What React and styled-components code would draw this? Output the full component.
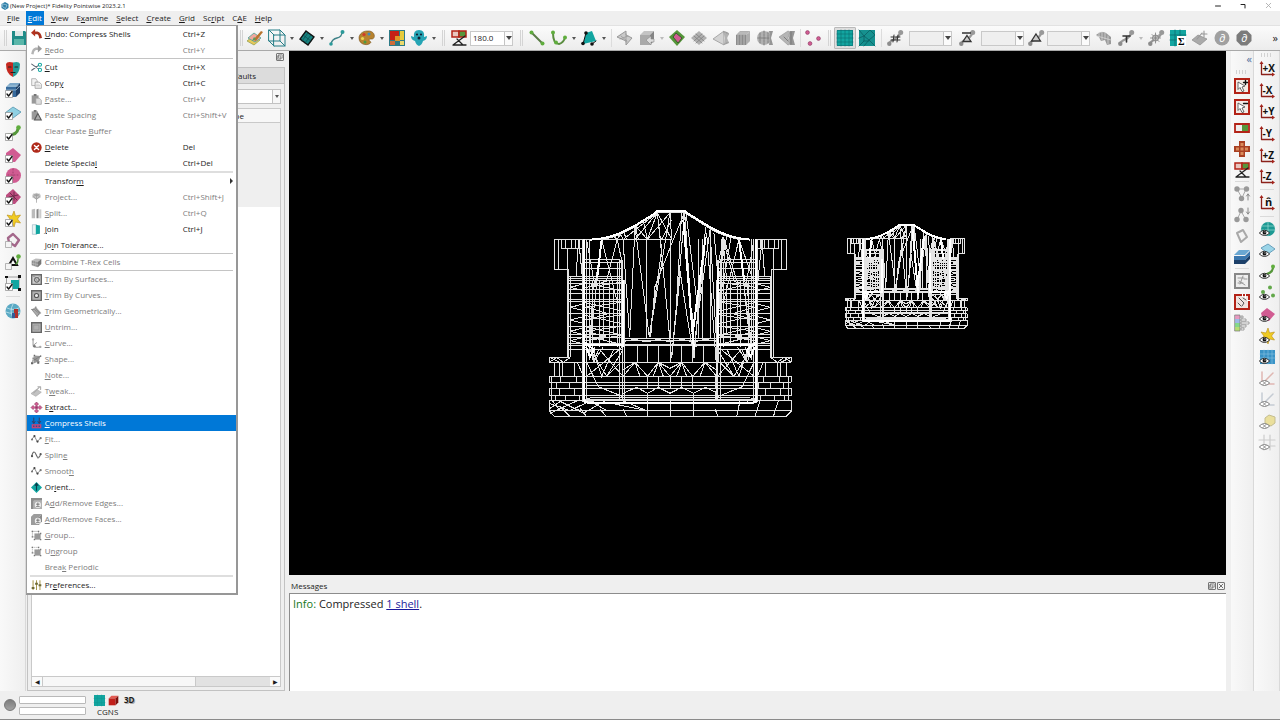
import React from "react";
import styled, { createGlobalStyle } from "styled-components";

const GlobalStyle = createGlobalStyle`
  * {
    box-sizing: border-box;
  }
  body {
    margin: 0;
    background: #efefef;
    color: #1c1c1c;
    font-family: "Open Sans", "Noto Sans", sans-serif;
    font-size: 8px;
    line-height: 12px;
  }
  button, input, select {
    font: inherit;
    color: inherit;
  }
`;

/* ---------- layout ---------- */

const Window = styled.div`
  display: flex;
  flex-direction: column;
  height: 100vh;
  overflow: hidden;
`;
const TitleBar = styled.header`
  display: flex;
  align-items: center;
  gap: 1px;
  height: 11px;
  padding-left: 1px;
  background: #fff;
`;
const Title = styled.h1`
  flex: 1;
  margin: 0;
  font-size: 6px;
  font-weight: 400;
`;
const WindowButton = styled.button`
  display: flex;
  align-items: center;
  justify-content: center;
  width: 24px;
  height: 11px;
  padding: 0;
  border: 0;
  background: none;
`;
const MenuBar = styled.nav`
  display: flex;
  height: 14px;
  padding-left: 3px;
`;
const MenuSlot = styled.div`
  position: relative;
  margin: 0 ${props => (props.$open ? "3px" : "0")} 0 ${props => (props.$open ? "2px" : "0")};
`;
const MenuButton = styled.button`
  height: 14px;
  padding: 0 ${props => (props.$open ? "2px" : "4px")};
  border: 0;
  background: ${props => (props.$open ? "#0078d7" : "none")};
  color: ${props => (props.$open ? "#fff" : "#1c1c1c")};
  line-height: 14px;
`;
const Body = styled.main`
  display: flex;
  flex: 1;
  min-height: 0;
`;

/* ---------- edit menu ---------- */

const MenuPopup = styled.div`
  position: absolute;
  z-index: 5;
  top: 100%;
  left: 0;
  width: 212px;
  border: 1px solid #a0a0a0;
  border-right: 2px solid #979797;
  border-bottom: 2px solid #979797;
  background: #fff;
`;
const MenuRow = styled.button`
  display: grid;
  grid-template-columns: 18px 138px 1fr 6px;
  align-items: center;
  width: 100%;
  height: 16px;
  padding: 0;
  border: 0;
  background: ${props => (props.$active ? "#0078d7" : "none")};
  color: ${props => (props.$active ? "#fff" : "#1c1c1c")};
  text-align: left;
  white-space: nowrap;
  &:disabled {
    color: #7d7d7d;
  }
  svg {
    margin-left: 4px;
  }
`;
const MenuSeparator = styled.hr`
  height: ${props => (props.$thick ? "2px" : "1px")};
  margin: 0 3px;
  border: 0;
  background: ${props => (props.$thick ? "#dedede" : "#c4c4c4")};
`;
const SubmenuArrow = styled.span`
  border: 3px solid transparent;
  border-left-color: #333;
  width: 0;
`;

/* ---------- toolbars ---------- */

const Toolbar = styled.div`
  display: flex;
  align-items: center;
  height: 26px;
  border-top: 1px solid #e2e2e2;
  border-bottom: 1px solid #a9a9a9;
  background: linear-gradient(#fbfbfb, #ececec);
`;
const FileTools = styled.div`
  display: flex;
  align-items: center;
  flex: 0 0 236px;
`;
const Handle = styled.span`
  flex: none;
  width: ${props => props.$width || 10}px;
  height: 16px;
  background: linear-gradient(90deg, #d4d4d4 1px, transparent 1px 2px, #d4d4d4 2px 3px, transparent 3px) no-repeat 4px 0;
`;
const Divider = styled.span`
  flex: none;
  width: ${props => props.$width || 5}px;
  height: 18px;
  background: linear-gradient(#dcdcdc, #dcdcdc) no-repeat center / 1px 100%;
`;
const ToolButton = styled.button`
  display: flex;
  flex: none;
  align-items: center;
  justify-content: center;
  width: 22px;
  height: 22px;
  padding: 0;
  border: 1px solid ${props => (props.$on ? "#b9b9b9" : "transparent")};
  border-radius: 1px;
  background: ${props => (props.$on ? "#dedede" : "none")};
`;
const CaretButton = styled.button`
  flex: none;
  width: 8px;
  height: 20px;
  padding: 0;
  border: 0;
  background: none;
  &::before {
    content: "";
    display: block;
    width: 0;
    margin: auto;
    border: 2px solid transparent;
    border-top: 3px solid ${props => (props.$off ? "#bbb" : "#555")};
    border-bottom: 0;
  }
`;
const Combo = styled.div`
  display: flex;
  flex: none;
  width: 43px;
  height: 15px;
  margin: 0 ${props => props.$gap || 0}px 0 ${props => props.$lead || 0}px;
  border: 1px solid #c9c9c9;
  background: ${props => (props.$off ? "#efefef" : "#fff")};
  input {
    flex: 1;
    min-width: 0;
    padding: 0 2px;
    border: 0;
    background: none;
    outline: none;
  }
  ${CaretButton} {
    height: 13px;
    border-left: 1px solid #c4c4c4;
    background: #fbfbfb;
    &::before {
      border-left-width: 3px;
      border-right-width: 3px;
      border-top: 4px solid #444;
    }
  }
`;
const Overflow = styled.button`
  margin: 0 0 0 auto;
  padding: 0 2px;
  border: 0;
  background: none;
  font-size: 11px;
`;
const SideStrip = styled.aside`
  display: flex;
  flex: none;
  flex-direction: column;
  width: ${props => props.$width}px;
  padding-top: ${props => props.$top}px;
  border-right: 1px solid #d9d9d9;
  background: linear-gradient(90deg, #f9f9f9, #efefef);
`;
const StripGroup = styled.div`
  display: flex;
  flex-direction: column;
  align-items: center;
  height: ${props => props.$size}px;
  ${ToolButton} {
    flex: 1;
    height: auto;
    min-height: 0;
  }
`;
const StripRule = styled.hr`
  flex: none;
  width: 14px;
  height: 1px;
  margin: ${props => props.$gap || 1}px auto;
  border: 0;
  background: #dadada;
`;
const StripGrip = styled.span`
  width: 12px;
  height: 4px;
  margin: ${props => props.$top}px auto 1px;
  background: repeating-linear-gradient(90deg, #d2d2d2 0 1px, transparent 1px 3px);
`;
const Collapse = styled.button`
  align-self: flex-end;
  height: 12px;
  padding: 0 1px;
  border: 0;
  background: none;
  color: #4d6c9c;
  font-size: 11px;
  line-height: 10px;
`;

/* ---------- dock panel ---------- */

const Dock = styled.section`
  display: flex;
  flex: none;
  flex-direction: column;
  width: 259px;
  padding-top: 2px;
`;
const DockHeader = styled.div`
  display: flex;
  justify-content: flex-end;
  gap: 1px;
  height: 14px;
  padding: 0 1px;
`;
const SmallButton = styled.button`
  width: 8px;
  height: 8px;
  padding: 0;
  border: 1px solid #777;
  border-radius: 1px;
  background: #f4f4f4;
  svg {
    display: block;
  }
`;
const Tab = styled.button`
  height: 17px;
  margin-left: 120px;
  padding: 0 28px 0 0;
  border: 1px solid #c2c2c2;
  background: #dcdcdc;
  text-align: right;
`;
const DockPage = styled.div`
  display: flex;
  flex: 1;
  flex-direction: column;
  min-height: 0;
  margin-left: 1px;
  padding: 5px 3px 3px;
  border: 1px solid #c2c2c2;
  border-top: 0;
`;
const DockSelect = styled.div`
  display: flex;
  justify-content: flex-end;
  height: 15px;
  margin-bottom: 4px;
  border: 1px solid #c2c2c2;
  background: #fff;
  select {
    flex: 1;
    border: 0;
    appearance: none;
    background: none;
  }
  ${CaretButton} {
    height: 13px;
    border-left: 1px solid #c2c2c2;
    background: #f7f7f7;
  }
`;
const EntityTable = styled.table`
  width: 100%;
  border-collapse: collapse;
  th {
    height: 14px;
    padding: 0 36px 0 0;
    border: 1px solid #c9c9c9;
    background: #f7f7f7;
    font-weight: 400;
    text-align: right;
  }
  td {
    height: 84px;
    background: #efefef;
    border-right: 1px solid #c9c9c9;
  }
`;
const EntityList = styled.div`
  flex: 1;
  border: 1px solid #c9c9c9;
  border-top: 0;
  background: #fff;
`;
const ScrollBar = styled.div`
  display: grid;
  grid-template-columns: 10px 62% 1fr 10px;
  height: 10px;
  border: 1px solid #c9c9c9;
  border-top: 0;
  background: #e2e2e2;
`;
const ScrollArrow = styled.button`
  padding: 0;
  border: 0;
  background: #fafafa;
  font-size: 6px;
  line-height: 8px;
`;
const ScrollThumb = styled.span`
  border: 1px solid #c9c9c9;
  border-width: 0 1px;
  background: #f7f7f7;
`;
const ScrollTrack = styled.span`
  background: #e2e2e2;
`;

/* ---------- view, messages, status ---------- */

const Center = styled.div`
  display: flex;
  flex: 1;
  flex-direction: column;
  min-width: 0;
  margin: 0 5px 0 4px;
`;
const Viewport = styled.div`
  flex: 1;
  min-height: 0;
  background: #000;
  svg {
    display: block;
    width: 100%;
    height: 100%;
  }
`;
const MessagesHeader = styled.div`
  display: flex;
  align-items: center;
  gap: 1px;
  height: 18px;
  padding: 4px 1px 0 2px;
  h2 {
    flex: 1;
    margin: 0;
    font-size: 8px;
    font-weight: 400;
  }
`;
const MessageLog = styled.div`
  height: 98px;
  padding: 2px 3px;
  border: 1px solid #8c8c8c;
  border-right: 0;
  border-bottom: 0;
  background: #fff;
  font-size: 11px;
  line-height: 16px;
  b {
    color: #16781a;
    font-weight: 400;
  }
  a {
    color: #1a1a9c;
  }
`;
const StatusBar = styled.footer`
  display: flex;
  align-items: center;
  gap: 3px;
  height: 29px;
  padding-left: 4px;
  border-bottom: 1px solid #8a8a8a;
`;
const StopButton = styled.button`
  width: 12px;
  height: 12px;
  padding: 0;
  border: 1px solid #777;
  border-radius: 50%;
  background: linear-gradient(#7d7d7d, #a2a2a2);
`;
const ProgressStack = styled.div`
  display: flex;
  flex-direction: column;
  gap: 3px;
  width: 67px;
`;
const ProgressTrack = styled.div`
  height: 8px;
  border: 1px solid #b9b9b9;
  border-radius: 1px;
  background: #fff;
`;
const SolverInfo = styled.div`
  display: flex;
  flex-direction: column;
  align-items: flex-start;
  margin-left: 5px;
  padding-top: 2px;
  span {
    padding-left: 3px;
  }
`;
const SolverIcons = styled.div`
  display: flex;
  align-items: center;
  gap: 3px;
  height: 12px;
  strong {
    padding-left: 2px;
    text-shadow: 1px 1px 0 #aaa;
  }
`;

/* ---------- icons ---------- */

const TEAL = "#12a5a0";
const DEEP_TEAL = "#0b6c70";
const GREEN = "#55963a";
const PINK = "#d15c92";
const RED = "#b32317";
const GRAY = "#a9a9a9";

const line = (color, width = 1.2) => ({
  fill: "none",
  stroke: color,
  strokeWidth: width,
  strokeLinecap: "round",
  strokeLinejoin: "round",
});

const Check = () => (
  <>
    <path d="M.5 8.5h7v7h-7z" fill="#fff" stroke="#8a8a8a" strokeWidth=".7" />
    <path d="M2 12l1.6 2L7 9.5" {...line("#111", 1.3)} />
  </>
);
const Box = () => <path d="M.5 9.5h6v6h-6z" fill="#f4f4f4" stroke="#999" strokeWidth=".7" />;
const Eye = () => (
  <>
    <path d="M.3 12Q5.500 6.500 10.700 12Q5.500 17 .3 12z" fill="#fff" stroke="#222" strokeWidth=".9" />
    <circle cx="5.500" cy="11.700" r="1.900" fill="#111" />
    <circle cx="6" cy="11" r=".6" fill="#fff" />
  </>
);
const EyeOff = () => (
  <>
    <path d="M.3 12Q5.500 7 10.700 12Q5.500 17 .3 12z" fill="#fff" stroke="#777" strokeWidth=".9" />
    <path d="M4 10.500l3 3M7 10.500l-3 3" {...line("#777", 0.8)} />
  </>
);
const AxisArrows = () => (
  <>
    <path d="M2.500 2v11.500H14" {...line("#8c211a", 1.3)} />
    <path d="M2.500 0l2 3h-4zM16 13.500l-3-2v4z" fill="#a3241c" />
  </>
);
const Axis = ({ label }) => (
  <>
    <AxisArrows />
    <text x="3.500" y="10.500" fontSize="10" fontWeight="700" fill="#111">{label}</text>
  </>
);
const Connector = ({ children }) => (
  <>
    <path d="M2 14Q3 11 7 9.500T13.500 3" {...line("#999", 2.4)} />
    <circle cx="2.300" cy="13.700" r="2.200" fill="#8c8c8c" />
    <circle cx="13.700" cy="2.500" r="2.500" fill="#999" />
    {children}
  </>
);
const Cube = ({ top, front, side }) => (
  <>
    <path d="M1 5l4-4h10l-4 4z" fill={top} />
    <path d="M1 5h10v10H1z" fill={front} />
    <path d="M11 5l4-4v10l-4 4z" fill={side} />
  </>
);
const GroupShape = ({ dots }) => (
  <>
    <path d="M2 2h9v8H2z" {...line("#aaa", 1)} strokeDasharray={dots ? "1 2" : "2 1"} />
    <path d="M5 5h9v9H5z" fill="#999" />
    <path d="M1 1h2v2H1zM10 1h2v2h-2zM1 9h2v2H1zM13 4h2v2h-2zM13 13h2v2h-2zM4 13h2v2H4z" fill="#777" />
  </>
);
const PlusMinus = () => (
  <>
    <circle cx="10" cy="10" r="4.500" fill="#eee" />
    <path d="M10 7v4M8 9h4M8 12.500h4" {...line("#555", 1)} />
  </>
);

const icons = {
  app: (
    <>
      <path d="M8 0l7 4v8l-7 4-7-4V4z" fill="#2f7fa8" />
      <path d="M4 4l8 2-3 7-5-3z" {...line("#d4eef8", 1)} />
    </>
  ),
  save: (
    <>
      <path d="M1 1h13l1 1v13H1z" fill="#208c88" />
      <path d="M4 1h8v5H4z" fill="#dfe9e8" />
      <path d="M3 9h10v6H3z" fill="#5bb6a9" />
    </>
  ),
  undo: (
    <>
      <path d="M4 5.500h5q4 1 5 8" {...line("#a8321f", 4)} strokeLinecap="butt" />
      <path d="M0 5.500L6 0v11z" fill="#b3321f" />
    </>
  ),
  redo: (
    <>
      <path d="M12 5.500H7q-4 1-5 8" {...line("#b4b4b4", 3.500)} strokeLinecap="butt" />
      <path d="M16 5.500L10 0v11z" fill="#999" />
    </>
  ),
  cut: (
    <>
      <path d="M1 3l10 7M1 12l10-7" {...line("#5a6470", 1.5)} />
      <circle cx="13" cy="4" r="2.300" {...line(TEAL, 1.5)} />
      <circle cx="13" cy="11.500" r="2.300" {...line(TEAL, 1.5)} />
    </>
  ),
  copy: (
    <>
      <path d="M1 1h6l2 3v7H1z" fill="#f2f2f2" stroke="#999" />
      <path d="M6 6h6l3 3v6H6z" fill="#fff" stroke="#888" />
      <path d="M8 9h4M8 11h5M8 13h5" {...line("#aaa", 0.8)} />
    </>
  ),
  paste: (
    <>
      <path d="M1 2h10v12H1z" fill="#999" />
      <path d="M4 0h4v3H4z" fill="#777" />
      <path d="M7 6h5l3 3v6H7z" fill="#ddd" stroke="#999" />
    </>
  ),
  pasteSpacing: (
    <>
      <path d="M1 2h9v12H1z" fill="#999" />
      <path d="M4 0h4v3H4z" fill="#777" />
      <path d="M10 5l5 9.500H5z" fill="#aaa" stroke="#555" strokeWidth="1.500" />
    </>
  ),
  remove: (
    <>
      <circle cx="8" cy="8" r="7.500" fill="#b02a1a" />
      <path d="M5 5l6 6M11 5l-6 6" {...line("#fff", 2)} />
    </>
  ),
  project: (
    <>
      <path d="M8 1l6 3v4l-6 3-6-3V4z" fill="#c4c4c4" />
      <path d="M8 4v11M4 7l4 4 4-4M4 3l8 3M12 3L4 6" {...line("#999", 1)} />
    </>
  ),
  split: (
    <>
      <path d="M1 2l5-1v14H1z" fill="#bbb" />
      <path d="M8 2l3-1v14H8z" fill="#888" />
      <path d="M12 2h3v13h-3z" fill="#ccc" />
    </>
  ),
  join: (
    <>
      <path d="M2 1h6v14H2z" fill="#e9f4f4" stroke="#8ab" strokeWidth=".8" />
      <path d="M7 1l6 1v12l-6 1z" fill={TEAL} />
    </>
  ),
  combine: (
    <>
      <path d="M1 5l6-3 8 1-5 4z" fill="#bbb" />
      <path d="M1 5l9 2v8l-9-3z" fill="#8c8c8c" />
      <path d="M10 7l5-4v7l-5 5z" fill="#777" />
      <path d="M4 6v7M7 6v8M1 9l9 2" {...line("#ccc", 0.7)} />
    </>
  ),
  trimSurfaces: (
    <>
      <path d="M1 1h14v14H1z" fill="#ccc" stroke="#666" strokeWidth="2" />
      <circle cx="8.500" cy="8.500" r="3.500" {...line("#555", 1.4)} />
      <path d="M3 3l6 3 3-2M6 6l4 5" {...line("#777", 1)} />
    </>
  ),
  trimCurves: (
    <>
      <path d="M1 1h14v14H1z" fill="#b0b0b0" stroke="#666" strokeWidth="2" />
      <circle cx="8" cy="8" r="3" fill="#eee" stroke="#555" strokeWidth="1.600" />
    </>
  ),
  trimGeo: (
    <>
      <path d="M1 5l6-4 8 9-6 5z" fill="#aaa" />
      <path d="M1 5h4l7 6-3 4M7 1v3l6 6M1 5l8 10" {...line("#777", 1)} />
    </>
  ),
  untrim: (
    <>
      <path d="M1 1h14v14H1z" fill="#b0b0b0" stroke="#666" strokeWidth="2" />
      <path d="M4.500 4.500h7v7h-7z" {...line("#8c8c8c", 0.8)} />
    </>
  ),
  curveMenu: (
    <>
      <path d="M3 2v9q3 4 10 2M3 11l5-4" {...line("#8c8c8c", 1.3)} />
      <circle cx="3" cy="2" r="1.700" fill="#aaa" />
      <circle cx="5" cy="12" r="1.900" fill="#777" />
      <circle cx="13.500" cy="13" r="1.700" fill="#aaa" />
    </>
  ),
  shapeMenu: (
    <>
      <path d="M5 2l9 1-3 8-8 3z" fill="#999" />
      <path d="M1 14l4-12M14 3L4 9M2 6l10 5" {...line("#777", 1)} />
      <path d="M0 12h3v3H0zM4 1h2v2H4zM13 2h2v2h-2zM9 11h3v3H9z" fill="#666" />
    </>
  ),
  tweak: (
    <>
      <path d="M0 11l8-6 7 4-8 6z" fill="#c2c2c2" stroke="#aaa" />
      <path d="M4 10L13 1M10 1h4v4" {...line("#aaa", 1.5)} />
    </>
  ),
  extract: (
    <>
      <path d="M8 0l3 3-3 3-3-3zM3 5l3 3-3 3-3-3zM13 5l3 3-3 3-3-3zM8 10l3 3-3 3-3-3z" fill={PINK} stroke="#7c2c52" strokeWidth=".8" />
      <path d="M6 6h4v4H6z" fill="#a1366c" />
    </>
  ),
  compress: (
    <>
      <path d="M1 9h14v6H1z" fill="#c24678" />
      <path d="M4 0v7M12 0v7M2 5l2 3 2-3M10 5l2 3 2-3" {...line("#38385c", 1.4)} />
      <path d="M3 11h2v2H3zM7 11h2v2H7zM11 11h2v2h-2z" fill="#304c92" />
    </>
  ),
  fit: (
    <>
      <path d="M1 8L5 3l4 8 5-5" {...line("#888", 1.4)} />
      <circle cx="1.500" cy="8" r="1.600" fill="#777" />
      <circle cx="5" cy="3" r="1.600" fill="#444" />
      <circle cx="9.500" cy="11" r="1.600" fill="#444" />
      <circle cx="14" cy="6" r="1.600" fill="#777" />
    </>
  ),
  spline: (
    <>
      <path d="M1 9Q4-2 7.500 7T14 6" {...line("#666", 1.6)} />
      <circle cx="1.500" cy="9" r="1.600" fill="#555" />
      <circle cx="10" cy="11" r="1.500" fill="#888" />
      <circle cx="14" cy="6" r="1.600" fill="#555" />
    </>
  ),
  orient: (
    <>
      <path d="M8 0l8 8-8 8-8-8z" fill={TEAL} />
      <path d="M8 3v9M6 5l2-3 2 3" {...line("#0b3c4c", 1.6)} />
    </>
  ),
  addEdges: (
    <>
      <path d="M0 0h16v4H4v12H0z" fill="#8c8c8c" />
      <path d="M4 4h12v12H4z" fill="#b0b0b0" />
      <PlusMinus />
    </>
  ),
  addFaces: (
    <>
      <path d="M0 4l4-4h12l-4 4v12H0z" fill="#9c9c9c" />
      <path d="M11 5l5-5v11l-5 5z" fill="#8a8a8a" />
      <PlusMinus />
    </>
  ),
  group: <GroupShape />,
  ungroup: <GroupShape dots />,
  prefs: (
    <>
      <path d="M3 1v13M8 1v13M13 1v13" {...line("#9b8a35", 1.3)} />
      <path d="M1 10h4v3H1zM6 4h4v3H6zM11 6h4v3h-4z" fill="#6e6a35" />
    </>
  ),

  sheets: (
    <>
      <path d="M0 11l6-5 7 4-6 5z" fill="#e7c95a" stroke="#8b9b48" strokeWidth=".7" />
      <path d="M1 8l6-5 7 5-6 4z" fill="#f0a8a0" stroke="#58a89a" strokeWidth=".9" />
      <path d="M6 10L14 1l2 1-7 9z" fill="#b8742e" />
      <path d="M5 11l2-4 2 2z" fill="#51a060" />
    </>
  ),
  wireCube: <path d="M0 0h11v11H0zM5 5h11v11H5zM0 0l5 5M11 0l5 5M0 11l5 5M11 11l5 5" {...line("#247d86", 1)} />,
  domain: (
    <>
      <path d="M7 1l8 6-6 8-8-6z" fill="#17827f" stroke="#111" strokeWidth="1.400" />
      <path d="M4 5l8 6M9 3L3 11M12 5l-6 8" {...line("#0c4b4d", 0.7)} />
    </>
  ),
  tealCurve: (
    <>
      <path d="M2 14Q3 9 8 8t5-6" {...line("#3f8288", 1.3)} />
      <circle cx="2" cy="14" r="1.800" fill="#2b9a9a" />
      <circle cx="13.500" cy="2" r="2" fill="#2b9a9a" />
    </>
  ),
  palette: (
    <>
      <path d="M8 1c9-1 9 9 4 8-3 0-2 2 0 3-1 4-12 4-12-4C0 4 4 1 8 1z" fill="#b8832e" stroke="#74501d" strokeWidth=".6" />
      <circle cx="5" cy="4.500" r="1.600" fill="#d23a2a" />
      <circle cx="10" cy="4" r="1.500" fill="#3d8ac0" />
      <circle cx="3.500" cy="8.500" r="1.600" fill="#ecd450" />
      <circle cx="6" cy="12" r="1.500" fill="#4d9942" />
    </>
  ),
  colors: (
    <>
      <path d="M0 0h16v16H0z" fill="#2d7b88" />
      <path d="M1 1h9v9H1z" fill="#c62017" />
      <path d="M6 6h5v5H6z" fill="#df9424" />
      <path d="M11 1h4v9h-4z" fill="#e6cb3c" />
      <path d="M1 11h5v4H1z" fill="#cf6c39" />
      <path d="M11 11h4v4h-4z" fill="#ecd96b" />
    </>
  ),
  ghost: (
    <>
      <path d="M3 7Q2 0 8 0t5 7l3-1q0 4-4 5-1 4-4 5-3-1-4-5-4-1-4-5z" fill="#25a4b4" />
      <circle cx="6" cy="4.500" r="1.100" fill="#123" />
      <circle cx="10" cy="4.500" r="1.100" fill="#123" />
      <circle cx="8" cy="8" r="1.500" fill="#123" />
    </>
  ),
  angle: (
    <>
      <path d="M1 1h7v6H1z" fill="#e8c6be" stroke={RED} strokeWidth="1.500" />
      <path d="M8 1h7v6H8z" fill="#57963b" stroke={RED} strokeWidth="1.500" />
      <path d="M14 6L2 15h13M6 9l6 6" {...line("#222", 1.3)} />
    </>
  ),
  greenLine: (
    <>
      <path d="M2 2l12 12" {...line("#5a7d46", 2)} />
      <circle cx="2.500" cy="2.500" r="2" fill="#5fad3d" />
      <circle cx="13.500" cy="13.500" r="2" fill="#5fad3d" />
    </>
  ),
  greenCurve: (
    <>
      <path d="M2 3q0 11 6 11 4-1 6-6" {...line("#5a8d40", 2)} />
      <circle cx="2" cy="2.500" r="2" fill="#5fad3d" />
      <circle cx="5" cy="12.500" r="2" fill="#5fad3d" />
      <circle cx="14" cy="7.500" r="2" fill="#5fad3d" />
    </>
  ),
  patch: (
    <>
      <path d="M5 3l6-2 4 10-13 3z" fill={TEAL} />
      <path d="M2 14L5 3M11 14l4-3" {...line("#111", 1)} />
      <circle cx="5" cy="3" r="1.800" fill="#111" />
      <circle cx="2" cy="13.500" r="1.800" fill="#111" />
      <circle cx="11" cy="14" r="1.800" fill="#111" />
    </>
  ),
  grayPatch: (
    <>
      <path d="M0 7l9-6v4l6 3-6 7v-4z" fill="#cacaca" stroke="#999" />
      <path d="M4 6l6 5M9 4v8M3 9l8-3" {...line("#999", 0.8)} />
    </>
  ),
  grayBlock: (
    <>
      <Cube top="#c4c4c4" front="#aaa" side="#858585" />
      <path d="M7 10l5-4v3h3v3h-3v3z" fill="#ddd" stroke="#888" strokeWidth=".6" />
    </>
  ),
  pinkDiamond: (
    <>
      <path d="M8 0l8 7-8 9-8-9z" fill={GREEN} />
      <path d="M7 3l6 5-4 5-5-6z" fill={PINK} stroke="#385e2b" />
    </>
  ),
  grayMesh: (
    <>
      <path d="M8 1l8 7-8 7-8-7z" fill="#b1b1b1" />
      <path d="M5 4l8 7M3 6l8 7M11 4l-8 7M13 6l-8 7" {...line("#808080", 0.8)} />
    </>
  ),
  coneMesh: (
    <>
      <path d="M0 9l11-8v14z" fill="#d3d3d3" stroke="#999" strokeWidth=".8" />
      <path d="M10 1q6 1 6 3l-2 4 2 5-5 2 1-7z" fill="#9c9c9c" />
      <path d="M12 3v10M14 4v8" {...line("#ddd", 0.7)} />
    </>
  ),
  blockMesh: (
    <>
      <Cube top="#b0b0b0" front="#8c8c8c" side="#9f9f9f" />
      <path d="M3 5v10M6 5v10M9 5v10M4 3h10M12 4v10M14 2v10" {...line("#ccc", 0.7)} />
    </>
  ),
  roundMesh: (
    <>
      <circle cx="7" cy="8" r="7" fill="#b0b0b0" />
      <path d="M7 1v14M3 3v10M1 8h12M11 2v12" {...line("#777", 0.8)} strokeDasharray="2 1" />
      <path d="M12 1h4l-2 7 2 7h-4l1-7z" fill="#959595" />
    </>
  ),
  foldMesh: (
    <>
      <path d="M0 7l9-6 2 1-2 6 2 6-2 1z" fill="#b5b5b5" stroke="#999" strokeWidth=".7" />
      <path d="M11 1h5l-2 7 2 7h-5l-1-7z" fill="#959595" />
      <path d="M5 7l4 4M12 2v12" {...line("#777", 0.9)} />
    </>
  ),
  points: (
    <>
      <circle cx="2.500" cy="2.500" r="1.900" fill={PINK} stroke="#8a3961" strokeWidth=".6" />
      <circle cx="13.500" cy="8.500" r="1.900" fill={PINK} stroke="#8a3961" strokeWidth=".6" />
      <circle cx="5" cy="13.500" r="1.900" fill={PINK} stroke="#8a3961" strokeWidth=".6" />
    </>
  ),
  grid: (
    <>
      <path d="M0 0h16v16H0z" fill={TEAL} />
      <path d="M4 0v16M8 0v16M12 0v16M0 4h16M0 8h16M0 12h16M.5.5h15v15H.5z" {...line(DEEP_TEAL, 0.6)} />
    </>
  ),
  triGrid: (
    <>
      <path d="M0 0h16v16H0z" fill="#16918f" />
      <path d="M0 0l5 6 6-6 5 5-6 5 6 6M0 16l5-5V6l5 4-5 6M5 11h5M0 8l5-2" {...line("#0b5f63", 0.8)} />
    </>
  ),
  tealSquare: (
    <>
      <path d="M0 0h16v16H0z" fill={TEAL} />
      <path d="M5 0v16M11 0v16M0 5h16M0 11h16" {...line("#0f928f", 0.6)} />
    </>
  ),
  hash: (
    <Connector>
      <path d="M7 5l-1 7M11 5l-1 7M4 7h9M4 10h9" {...line("#333", 1)} />
    </Connector>
  ),
  beginDelta: (
    <Connector>
      <path d="M3 3h9M8 5.500l4 6H4z" fill="#ccc" stroke="#333" strokeWidth="1.300" />
    </Connector>
  ),
  delta: (
    <Connector>
      <path d="M8 4l4.500 7h-9z" fill="#ccc" stroke="#333" strokeWidth="1.300" />
    </Connector>
  ),
  solid: (
    <>
      <path d="M0 5q5-5 10-2l5 4v7l-4 1-2-5-4 1-2-4z" fill="#999" />
      <path d="M3 3v4M6 2v8M9 3v6M12 6v8M1 6l14 4" {...line("#d5d5d5", 0.8)} />
    </>
  ),
  tConn: (
    <Connector>
      <path d="M5 6h7M8.500 6v6" {...line("#333", 1.6)} />
    </Connector>
  ),
  gearConn: (
    <Connector>
      <circle cx="7.500" cy="8" r="3" fill="#ddd" stroke="#888" />
      <path d="M7.500 3v10M2.500 8h10M4 4.500l7 7M11 4.500l-7 7" {...line("#888", 0.9)} />
    </Connector>
  ),
  sigma: (
    <>
      <path d="M0 0h16v16H0z" fill={TEAL} />
      <path d="M5 0v16M10 0v6M0 5h16M0 10h6" {...line(DEEP_TEAL, 0.8)} />
      <path d="M7 6h9v10H7z" fill="#fff" />
      <text x="8" y="15" fontSize="10" fontWeight="700" fontFamily="Liberation Serif">Σ</text>
    </>
  ),
  sparkMesh: (
    <>
      <path d="M0 10l6-5 9 4-7 6z" fill="#aaa" stroke="#8c8c8c" strokeWidth=".7" />
      <path d="M12 1v6M9 4h6M5 9l5-6" {...line("#999", 1.1)} />
    </>
  ),
  partial: (
    <>
      <circle cx="8" cy="8" r="7.500" fill="#a0a0a0" />
      <text x="5" y="12" fontSize="11" fontStyle="italic" fill="#fff">∂</text>
    </>
  ),
  partialDark: (
    <>
      <path d="M5 .5h6L15.500 5v6L11 15.500H5L.5 11V5z" fill="#7b7b7b" />
      <text x="5" y="12" fontSize="11" fontStyle="italic" fill="#fff">∂</text>
    </>
  ),

  mask: (
    <>
      <path d="M8 1.500Q2 0 1 3q0 10 7 13z" fill="#c5281f" />
      <path d="M8 1.500q6-1.500 7 1.500 0 10-7 13z" fill="#249a98" />
      <path d="M3.500 6h2.500M10 6h2.500M6 11.500h4" {...line("#222", 1.2)} />
    </>
  ),
  blueBlock: (
    <>
      <Cube top="#7ba6c8" front="#376a9c" side="#1f3f66" />
      <path d="M3 4h10M1 8h10l4-4" {...line("#bdd8ea", 0.6)} />
      <Check />
    </>
  ),
  blueSheet: (
    <>
      <path d="M0 9l8-6 8 5-8 6z" fill="#8fd0e2" stroke="#68a4bb" />
      <Check />
    </>
  ),
  connCheck: (
    <>
      <path d="M3 10q9 0 10-6" {...line(GREEN, 3)} />
      <circle cx="13.500" cy="2.500" r="2.300" fill="#5fad3d" />
      <Check />
    </>
  ),
  pinkSheet: (
    <>
      <path d="M1 6l7-5 8 7-6 7H1z" fill={PINK} />
      <Check />
    </>
  ),
  pinkBall: (
    <>
      <circle cx="8.500" cy="7.500" r="7.500" fill={PINK} />
      <path d="M8 1v11M3 7h12" {...line("#9c3f6c", 0.9)} strokeDasharray="1 2" />
      <Check />
    </>
  ),
  pinkMesh: (
    <>
      <path d="M1 6l7-6 8 8-6 7H1z" fill="#bd4d80" />
      <path d="M5 4l7 7M9 3v8M4 8l9-2" {...line("#6c2948", 0.9)} />
      <Check />
    </>
  ),
  star: (
    <>
      <path d="M9 0l1.500 5 5-1-3 4 3 4-5-1L9 16l-2-5-5 1 3-4-3-4 5 1z" fill="#f0cb23" stroke="#b88c12" strokeWidth=".6" />
      <Check />
    </>
  ),
  ring: (
    <>
      <path d="M3 6l5-4 6 6-4 6-6-4z" {...line("#a3678a", 2.4)} />
      <Box />
    </>
  ),
  deltaBox: (
    <>
      <path d="M8 4l4 7H4z" fill="#fff" stroke="#111" strokeWidth="2" />
      <circle cx="13.500" cy="2.500" r="2.300" fill="#5fad3d" />
      <path d="M13 5q0 4-2 5" {...line(GREEN, 1.5)} />
      <Box />
    </>
  ),
  frame: (
    <>
      <path d="M1.500 2h12.500v12M1.500 2v12" {...line("#888", 0.8)} />
      <path d="M6 5h8v9H6z" fill={TEAL} />
      <path d="M0 1h3v2H0zM13 0h3v3h-3zM13 13h3v3h-3z" fill="#111" />
      <Check />
    </>
  ),
  globeRed: (
    <>
      <circle cx="8" cy="8" r="7.500" fill="#5aa9c4" />
      <path d="M2 5q6 3 12 0M1 9q7 3 14 0M8 1Q4 8 8 15" {...line("#c5e6ee", 0.8)} />
      <path d="M9 6h4v9H9z" fill="#b0302a" />
      <path d="M7 10h3v5H7z" fill="#345c96" />
    </>
  ),

  pickAdd: (
    <>
      <path d="M1 1h14v14H1z" fill="#f3ebe6" stroke={RED} strokeWidth="2" />
      <path d="M4 4l7 4-3 1 2 4-2 .5-2-4-2 2z" fill="#fff" stroke="#444" strokeWidth=".8" />
      <path d="M11.500 2.500v4M9.500 4.500h4" {...line("#111", 1.4)} />
    </>
  ),
  pickSub: (
    <>
      <path d="M1 1h14v14H1z" fill="#f3ebe6" stroke={RED} strokeWidth="2" />
      <path d="M4 4l7 4-3 1 2 4-2 .5-2-4-2 2z" fill="#fff" stroke="#444" strokeWidth=".8" />
      <path d="M9.500 4.500h4" {...line("#111", 1.4)} />
    </>
  ),
  pair: (
    <>
      <path d="M1 4h14v8H1z" fill="#eee" stroke={RED} strokeWidth="1.800" />
      <path d="M8 5h6v6H8z" fill={GREEN} />
    </>
  ),
  cross: (
    <>
      <path d="M5 0h6v5h5v6h-5v5H5v-5H0V5h5z" fill="#a83f22" />
      <path d="M6.500 2h3v3h-3zM6.500 11h3v3h-3zM2 6.500h3v3H2zM11 6.500h3v3h-3zM6.500 6.500h3v3h-3z" fill="#d98a5a" />
    </>
  ),
  treeUp: (
    <>
      <path d="M3 3l5 9 4-9M3 3h9" {...line(GRAY, 1)} />
      <circle cx="3" cy="3" r="2.700" fill="#999" />
      <circle cx="12.500" cy="3" r="2.700" fill="#999" />
      <circle cx="7.500" cy="12.500" r="2.700" fill="#999" />
      <path d="M14 14V8M12.500 10L14 8l1.500 2" {...line("#888", 1)} />
    </>
  ),
  treeDown: (
    <>
      <path d="M3 13l4-9 5 9" {...line(GRAY, 1)} />
      <circle cx="7" cy="3.500" r="2.700" fill="#999" />
      <circle cx="3" cy="12.500" r="2.700" fill="#999" />
      <circle cx="12" cy="12.500" r="2.700" fill="#999" />
      <path d="M14 1v6M12.500 5L14 7l1.500-2" {...line("#888", 1)} />
    </>
  ),
  grayRing: <path d="M3 5l6-3 4 7-6 5z" {...line(GRAY, 2)} />,
  layers: (
    <>
      <path d="M0 6l5-5h11l-5 5z" fill="#6aa7d2" />
      <path d="M0 7h11l5-5v4l-5 5H0z" fill="#3b77ae" />
      <path d="M0 11h11l5-5v4l-5 5H0z" fill="#1c3f68" />
    </>
  ),
  pickGray: (
    <>
      <path d="M1 1h14v14H1z" fill="#eee" stroke="#888" strokeWidth="2" />
      <path d="M4 5h6M9 3l-3 8M4 10h5M10 6h3M5 8l6 4" {...line("#999", 1)} />
    </>
  ),
  pickDots: (
    <>
      <path d="M1 1h14v14H1z" fill="#f0e4e0" stroke={RED} strokeWidth="2" />
      <path d="M5 4l5 5-2 3M4 9l3 3M9 4l3 2" {...line("#555", 1)} />
      <path d="M8 0h1v3H8zM11 0h1v4h-1zM13 6h3v1h-3z" fill="#fff" />
    </>
  ),
  spectrum: (
    <>
      <path d="M1 0h5v4H1z" fill="#e79ac0" />
      <path d="M1 4h5v4H1z" fill="#9fb8e6" />
      <path d="M1 8h5v4H1z" fill="#84d88a" />
      <path d="M1 12h5v4H1z" fill="#b5dd72" />
      <path d="M7 1h2v2H7zM7 4h5v2H7zM7 7h8v2H7zM7 10h5v2H7zM7 13h3v2H7z" fill="#fff" stroke="#8c8c8c" strokeWidth=".8" />
      <path d="M1 0h5v16H1z" {...line("#777", 0.7)} />
    </>
  ),
  globeEye: (
    <>
      <circle cx="9" cy="8" r="7" fill="#1c9993" />
      <path d="M3 5h12M2 9h14M9 1v14" {...line("#9adbd3", 0.7)} />
      <Eye />
    </>
  ),
  sheetEye: (
    <>
      <path d="M2 6l7-4 7 5-7 5z" fill="#9bd5e8" stroke="#6aa0bc" />
      <Eye />
    </>
  ),
  connEye: (
    <>
      <path d="M4 11q9-1 10-7" {...line(GREEN, 2.2)} />
      <circle cx="14" cy="2.500" r="2" fill="#5fad3d" />
      <Eye />
    </>
  ),
  dotsEye: (
    <>
      <circle cx="11" cy="2.500" r="2" fill="#62a84a" />
      <circle cx="14" cy="10.500" r="2" fill="#62a84a" />
      <circle cx="4" cy="7" r="2" fill="#62a84a" />
      <Eye />
    </>
  ),
  pinkEye: (
    <>
      <path d="M2 6l6-5 8 6-6 7H4z" fill={PINK} />
      <Eye />
    </>
  ),
  starEye: (
    <>
      <path d="M9 0l1.500 5 5-1-3 4 3 4-5-1L9 16l-2-5-5 1 3-4-3-4 5 1z" fill="#f0cb23" stroke="#b88c12" strokeWidth=".6" />
      <Eye />
    </>
  ),
  blocksEye: (
    <>
      <path d="M1 1h15v14H1z" fill="#3993c6" />
      <path d="M1 5h15M1 9h15M5 1v14M9 1v14M13 1v14" {...line("#8cc5e2", 0.6)} />
      <Eye />
    </>
  ),
  axisRed: (
    <>
      <path d="M3 1v12h12M3 13L14 2" {...line("#dfb7b2", 1.5)} />
      <EyeOff />
    </>
  ),
  axisGray: (
    <>
      <path d="M3 1v12h12M3 13L14 2" {...line("#c5cbd3", 1.5)} />
      <EyeOff />
    </>
  ),
  cubeOff: (
    <>
      <path d="M6 4l4-3 6 2v6l-4 3-6-2z" fill="#eadf9c" stroke="#c4bd91" />
      <EyeOff />
    </>
  ),
  gridOff: (
    <>
      <path d="M5 0v15M11 0v15M0 5h16M2 11h14" {...line("#ccc", 1.2)} />
      <EyeOff />
    </>
  ),
  redCube: <Cube top="#e25a52" front="#c11f1a" side="#7c0f0c" />,
  float: <path d="M5 2h9v9H5zM2 5h8v9H2z" {...line("#555", 1.5)} />,
  close: <path d="M3 3l10 10M13 3L3 13" {...line("#444", 2)} />,
  windowClose: <path d="M4 4l8 8M12 4l-8 8" {...line("#aaa", 1.5)} />,
  minimize: <path d="M3 8h10" {...line("#222", 2)} />,
  restore: <path d="M4 5h8v7" {...line("#222", 2)} />,
  axisPX: <Axis label="+X" />,
  axisNX: <Axis label="-X" />,
  axisPY: <Axis label="+Y" />,
  axisNY: <Axis label="-Y" />,
  axisPZ: <Axis label="+Z" />,
  axisNZ: <Axis label="-Z" />,
  axisN: (
    <>
      <AxisArrows />
      <text x="6" y="11" fontSize="11" fontWeight="700" fill="#111">n̂</text>
    </>
  ),
};

const Icon = ({ name, size = 16 }) => (
  <svg width={size} height={size} viewBox="0 0 16 16" overflow="visible" aria-hidden="true">
    {icons[name]}
  </svg>
);

/* ---------- data ---------- */

const menus = ["&File", "&Edit", "&View", "E&xamine", "&Select", "&Create", "&Grid", "Sc&ript", "C&AE", "&Help"];

// [label, shortcut, icon, enabled], or a separator
const editMenu = [
  ["&Undo: Compress Shells", "Ctrl+Z", "undo", true],
  ["&Redo", "Ctrl+Y", "redo"],
  "line",
  ["&Cut", "Ctrl+X", "cut", true],
  ["Cop&y", "Ctrl+C", "copy", true],
  ["&Paste...", "Ctrl+V", "paste"],
  ["Paste Spacing", "Ctrl+Shift+V", "pasteSpacing"],
  ["Clear Paste &Buffer", "", ""],
  ["&Delete", "Del", "remove", true],
  ["Delete Specia&l", "Ctrl+Del", "", true],
  "thick",
  ["Transfor&m", "submenu", "", true],
  ["Pro&ject...", "Ctrl+Shift+J", "project"],
  ["&Split...", "Ctrl+Q", "split"],
  ["&Join", "Ctrl+J", "join", true],
  ["Jo&in Tolerance...", "", "", true],
  "line",
  ["Combine T-Rex Cells", "", "combine"],
  "line",
  ["&Trim By Surfaces...", "", "trimSurfaces"],
  ["&Trim By Curves...", "", "trimCurves"],
  ["&Trim Geometrically...", "", "trimGeo"],
  ["&Untrim...", "", "untrim"],
  ["&Curve...", "", "curveMenu"],
  ["&Shape...", "", "shapeMenu"],
  ["&Note...", "", ""],
  ["T&weak...", "", "tweak"],
  ["E&xtract...", "", "extract", true],
  ["&Compress Shells", "", "compress", true],
  ["&Fit...", "", "fit"],
  ["Splin&e", "", "spline"],
  ["Smoot&h", "", "fit"],
  ["Or&ient...", "", "orient", true],
  ["A&dd/Remove Edges...", "", "addEdges"],
  ["&Add/Remove Faces...", "", "addFaces"],
  ["&Group...", "", "group"],
  ["U&ngroup", "", "ungroup"],
  ["Brea&k Periodic", "", ""],
  "thick",
  ["Pr&eferences...", "", "prefs", true],
];

const leftTools = ["mask", "blueBlock", "blueSheet", "connCheck", "pinkSheet", "pinkBall", "pinkMesh", "star", "ring", "deltaBox", "frame"];
const axisTools = ["axisPX", "axisNX", "axisPY", "axisNY", "axisPZ", "axisNZ"];
const showTools = ["globeEye", "sheetEye", "connEye", "dotsEye", "pinkEye", "starEye", "blocksEye", "axisRed", "axisGray", "cubeOff", "gridOff"];

/* ---------- pieces ---------- */

const Mnemonic = ({ text }) => {
  const at = text.indexOf("&");
  if (at < 0) return <span>{text}</span>;
  return (
    <span>
      {text.slice(0, at)}
      <u>{text[at + 1]}</u>
      {text.slice(at + 2)}
    </span>
  );
};

const Tools = ({ names }) =>
  names.map(name => (
    <ToolButton key={name} aria-label={name}>
      <Icon name={name} />
    </ToolButton>
  ));

const DropTool = ({ name, off }) => (
  <>
    <ToolButton aria-label={name}>
      <Icon name={name} />
    </ToolButton>
    <CaretButton $off={off} aria-label={`${name} options`} />
  </>
);

const NumberCombo = ({ label, value, ...rest }) => (
  <Combo {...rest}>
    <input aria-label={label} defaultValue={value} />
    <CaretButton aria-label={`${label} list`} />
  </Combo>
);

const EditMenu = () => (
  <MenuPopup>
    {editMenu.map((item, i) =>
      typeof item === "string" ? (
        <MenuSeparator key={i} $thick={item === "thick"} />
      ) : (
        <MenuRow key={i} disabled={!item[3]} $active={item[2] === "compress"}>
          {item[2] ? <Icon name={item[2]} size={11} /> : <span />}
          <Mnemonic text={item[0]} />
          <span>{item[1] === "submenu" ? "" : item[1]}</span>
          {item[1] === "submenu" && <SubmenuArrow />}
        </MenuRow>
      )
    )}
  </MenuPopup>
);

/* ---------- model ---------- */

const seg = (x1, y1, x2, y2) => `M${x1} ${y1}L${x2} ${y2}`;

// one half of the model; the other is its mirror about x = 391
const halfPaths = () => {
  const out = [
    "M130 118H43V208H85M57 118V208M65 118V147H130M78 118V147M95 118V147M108 118V147M120 118V147",
    "M82 147V472M87 208V472M91 228V472M128 118V606M131 118V606M134 118V606M140 118V600M148 118V480M157 240V480",
    "M249 180V600M246 190V440M253 240V600M180 240V440M190 240V420M210 240V430M232 190V440M239 180V600M222 255V400",
    "M136 180H240L249 195M136 188H249M136 205H249M130 118V147",
    "M43 487V529M68 487V529M60 487V529M105 487V529M112 487L130 529M28 472H91M28 487H91M28 472V487M28 487L50 472L70 487L91 472M28 472L60 487",
    "M131 606L150 612H391M136 598H391M131 600Q150 590 160 606M150 450L165 480L190 440M165 440L160 490L175 450",
    "M140 430L200 529L249 450M160 450L185 529L220 450M140 529L249 440M140 487L175 560L249 590M180 450L249 529M200 529L240 490",
    "M116 120L108 228M116 120L128 240M140 120L165 260L185 119M185 119L150 430M185 119L230 300M160 250L150 430M232 119L249 200M232 118L200 240",
  ];
  [230, 236, 243, 251, 268, 280, 300, 305, 340, 380, 405, 413, 430, 436, 448].forEach(y => out.push(seg(85, y, 249, y)));
  [262, 322, 360, 394, 422].forEach((y, i) => {
    out.push(seg(91, y, 130, y - 10), seg(91, y, 130, y + 10), seg(136, y, 249, y - 16), seg(136, y - 14, 249, y + 12));
    out.push(seg(140, y, 200, y + (i % 2 ? 18 : -18)));
  });
  [
    [529, 547, [35, 62, 110]],
    [547, 565, [50, 90, 127]],
    [565, 587, [35, 60, 105]],
    [587, 603, [48, 78, 120]],
  ].forEach(([y1, y2, xs]) => {
    out.push(seg(28, y1, 391, y1), seg(28, y2, 391, y2));
    xs.forEach(x => out.push(seg(x, y1, x, y2)));
  });
  out.push("M28 529V547M35 547V565M28 565V587M35 587V603");
  return out.join("");
};

const fullPaths = () => {
  const out = [
    "M28 603V632L43 650H738L755 632V603ZM28 632H755M38 603L60 632",
    "M43 118H395M91 487H691M249 415H535M249 421H535M136 434H645M249 438H535M140 556H640M150 592H630",
    "M185 119C235 110 250 100 285 80L352 38H434L510 86C540 103 570 116 610 120",
    "M352 38L250 118M352 38L285 118M352 38L322 118L285 76L295 118M322 118L390 38L395 118L352 38M365 118L395 60M400 118L434 38M310 62L322 118M250 118L240 99M260 118L250 95L230 118L220 108",
    "M249 118L269 412L285 80L328 412L365 150L352 38M328 412L390 38M332 412L345 260L400 118M352 38L368 190L395 475L418 220L434 38",
    "M425 38L410 300M430 38L462 475L440 340L418 200M434 38L458 400L500 100L528 480L550 110M434 38L462 475L497 80M438 38L475 340L510 90",
    "M434 38L440 118M510 86L528 400M548 110L560 240M573 112L548 260M597 118L625 380M597 118L640 240M560 110L535 240L522 100",
    "M458 340L462 475L480 260M455 400L470 440M420 230L395 475M495 140L462 450M550 110L590 240",
    "M249 529L285 487L323 529L355 487L390 529L425 487L458 529L495 487L530 529M285 487L249 510M285 487L300 529M355 487L390 505L425 487M340 529L355 487L370 529M410 529L425 487L440 529M495 487L480 529M495 487L530 510",
    "M249 425L285 418L320 426L355 418L390 426L425 418L460 426L495 418L535 425",
    "M249 580L290 562L323 580L355 562L390 580L425 562L460 580L495 562L535 580M255 600V580M323 600V580M460 600V580M527 600V580",
    "M28 610L90 632L150 603L200 632M30 625L60 605L120 632M60 603L130 640L190 605L320 632L250 603M90 650L60 620M140 650L120 625M200 650L180 628M30 640L110 603",
    "M260 650L250 628M323 603V650M391 603V650M460 603V650M535 650L525 628M590 650L600 603M645 650L660 603M700 650L715 603",
  ];
  [249, 293, 323, 355, 391, 425, 458, 490, 535].forEach(x => out.push(seg(x, 434, x, 487)));
  [323, 355, 391, 425, 458, 527].forEach(x => out.push(seg(x, 529, x, 565)));
  [320, 391, 475, 488, 513, 545].forEach(x => out.push(seg(x, 118, x, 415)));
  return out.join("");
};

// edges where many lines run together
const heavyPaths = [
  "M150 119C220 115 250 95 285 77L345 40L352 33H434L442 40L510 81C540 99 580 116 630 119",
  "M132 118V600Q134 608 145 608H636Q648 608 649 600V118M136 434H250M532 434H645",
  "M132 425L162 450L150 470L138 440M649 425L620 450L632 470L644 440M249 240V440M535 200V440",
  "M430 60L462 450M458 400L497 110M185 119L172 230M597 119L612 240",
].join("");

const Wireframe = () => {
  const half = halfPaths();
  return (
    <>
      <path d={half} vectorEffect="non-scaling-stroke" />
      <path d={half} transform="translate(782 0) scale(-1 1)" vectorEffect="non-scaling-stroke" />
      <path d={fullPaths()} vectorEffect="non-scaling-stroke" />
      <path d={heavyPaths} stroke="#fff" strokeWidth="2" vectorEffect="non-scaling-stroke" />
    </>
  );
};

const Model = () => (
  <svg viewBox="0 0 937 524" role="img" aria-label="Wireframe view">
    <g fill="none" stroke="#e4e4e4" strokeWidth="1" shapeRendering="crispEdges">
      <g transform="translate(251 149) scale(.3333)">
        <Wireframe />
      </g>
      <g transform="translate(551.5 168) scale(.168)">
        <Wireframe />
      </g>
    </g>
  </svg>
);

const App = () => (
  <Window>
    <GlobalStyle />
    <TitleBar>
      <Icon name="app" size={8} />
      <Title>(New Project)* Fidelity Pointwise 2023.2.1</Title>
      <WindowButton aria-label="Minimize"><Icon name="minimize" size={8} /></WindowButton>
      <WindowButton aria-label="Restore"><Icon name="restore" size={8} /></WindowButton>
      <WindowButton aria-label="Close"><Icon name="windowClose" size={9} /></WindowButton>
    </TitleBar>
    <MenuBar>
      {menus.map(name => (
        <MenuSlot key={name} $open={name === "&Edit"}>
          <MenuButton $open={name === "&Edit"}>
            <Mnemonic text={name} />
          </MenuButton>
          {name === "&Edit" && <EditMenu />}
        </MenuSlot>
      ))}
    </MenuBar>
    <Toolbar>
      <FileTools>
        <Handle $width={8} />
        <Tools names={["save"]} />
      </FileTools>
      <Handle $width={8} />
      <Tools names={["sheets"]} />
      <DropTool name="wireCube" />
      <DropTool name="domain" />
      <DropTool name="tealCurve" />
      <DropTool name="palette" />
      <Tools names={["colors"]} />
      <DropTool name="ghost" />
      <Handle />
      <Tools names={["angle"]} />
      <NumberCombo label="Angle" value="180.0" $gap={3} />
      <Handle />
      <Tools names={["greenLine"]} />
      <DropTool name="greenCurve" />
      <DropTool name="patch" />
      <Divider $width={6} />
      <Tools names={["grayPatch"]} />
      <DropTool name="grayBlock" off />
      <Tools names={["pinkDiamond", "grayMesh", "coneMesh", "blockMesh", "roundMesh", "foldMesh"]} />
      <Divider $width={4} />
      <Tools names={["points"]} />
      <Handle />
      <ToolButton $on aria-label="Structured">
        <Icon name="grid" />
      </ToolButton>
      <Tools names={["triGrid"]} />
      <Divider $width={6} />
      <Tools names={["hash"]} />
      <NumberCombo label="Dimension" $off $lead={3} $gap={4} />
      <Tools names={["beginDelta"]} />
      <NumberCombo label="Begin spacing" $off $lead={3} $gap={1} />
      <Tools names={["delta"]} />
      <NumberCombo label="Spacing" $off $gap={3} />
      <Tools names={["solid"]} />
      <DropTool name="tConn" off />
      <Tools names={["gearConn", "sigma", "sparkMesh", "partial", "partialDark"]} />
      <Overflow aria-label="More tools">»</Overflow>
    </Toolbar>
    <Body>
      <SideStrip $width={26} $top={7}>
        <StripGroup $size={236}>
          <Tools names={leftTools} />
        </StripGroup>
        <StripRule $gap={2} />
        <StripGroup $size={24}>
          <Tools names={["globeRed"]} />
        </StripGroup>
      </SideStrip>
      <Dock>
        <DockHeader>
          <SmallButton aria-label="Float panel"><Icon name="float" size={6} /></SmallButton>
        </DockHeader>
        <Tab>Defaults</Tab>
        <DockPage>
          <DockSelect>
            <select aria-label="Filter" />
            <CaretButton aria-label="Filter list" />
          </DockSelect>
          <EntityTable>
            <thead>
              <tr><th>Type</th></tr>
            </thead>
            <tbody>
              <tr><td /></tr>
            </tbody>
          </EntityTable>
          <EntityList />
          <ScrollBar>
            <ScrollArrow aria-label="Scroll left">◀</ScrollArrow>
            <ScrollThumb />
            <ScrollTrack />
            <ScrollArrow aria-label="Scroll right">▶</ScrollArrow>
          </ScrollBar>
        </DockPage>
      </Dock>
      <Center>
        <Viewport>
          <Model />
        </Viewport>
        <MessagesHeader>
          <h2>Messages</h2>
          <SmallButton aria-label="Float messages"><Icon name="float" size={6} /></SmallButton>
          <SmallButton aria-label="Close messages"><Icon name="close" size={6} /></SmallButton>
        </MessagesHeader>
        <MessageLog>
          <b>Info:</b> Compressed <a href="#shell">1 shell</a>.
        </MessageLog>
      </Center>
      <SideStrip $width={23} $top={2}>
        <Collapse aria-label="Collapse">«</Collapse>
        <StripGrip $top={5} />
        <StripGroup $size={105}>
          <Tools names={["pickAdd", "pickSub", "pair", "cross", "angle"]} />
        </StripGroup>
        <StripRule />
        <StripGroup $size={84}>
          <Tools names={["treeUp", "treeDown", "grayRing", "layers"]} />
        </StripGroup>
        <StripRule />
        <StripGroup $size={63}>
          <Tools names={["pickGray", "pickDots", "spectrum"]} />
        </StripGroup>
      </SideStrip>
      <SideStrip $width={26} $top={1}>
        <StripGrip $top={1} />
        <StripGroup $size={130}>
          <Tools names={axisTools} />
        </StripGroup>
        <StripRule />
        <StripGroup $size={24}>
          <Tools names={["axisN"]} />
        </StripGroup>
        <StripRule />
        <StripGroup $size={236}>
          <Tools names={showTools} />
        </StripGroup>
      </SideStrip>
    </Body>
    <StatusBar>
      <StopButton aria-label="Stop" />
      <ProgressStack>
        <ProgressTrack />
        <ProgressTrack />
      </ProgressStack>
      <SolverInfo>
        <SolverIcons>
          <Icon name="tealSquare" size={11} />
          <Icon name="redCube" size={11} />
          <strong>3D</strong>
        </SolverIcons>
        <span>CGNS</span>
      </SolverInfo>
    </StatusBar>
  </Window>
);

export default App;
